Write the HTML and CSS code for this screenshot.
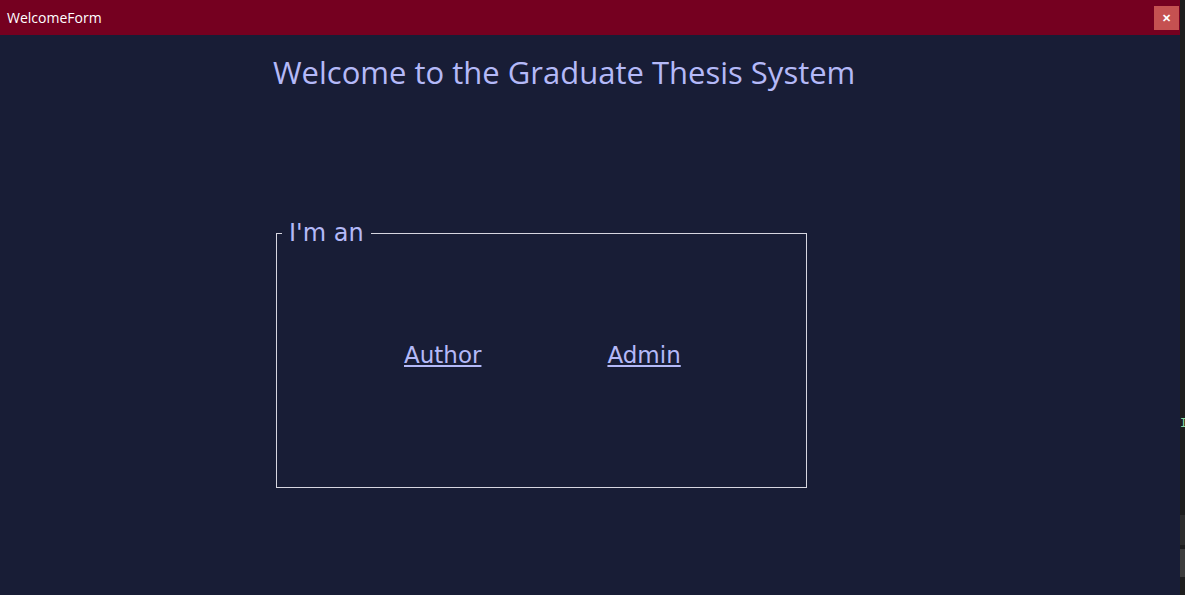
FILE: index.html
```html
<!DOCTYPE html>
<html lang="en">
<head>
  <meta charset="UTF-8">
  <meta name="viewport" content="width=device-width, initial-scale=1.0">
  <title>WelcomeForm</title>
  <link rel="stylesheet" href="styles.css">
</head>
<body>
  <div class="window">
    <div class="titlebar">
      <span class="title">WelcomeForm</span>
      <button class="close">&#x2715;</button>
    </div>

    <div class="content">
      <h1>Welcome to the Graduate Thesis System</h1>

      <fieldset class="role-box">
        <legend>I'm an</legend>
        <div class="roles">
          <a href="#" class="role">Author</a>
          <a href="#" class="role">Admin</a>
        </div>
      </fieldset>
    </div>
  </div>

  <div class="side-strip">
    <span class="caret">I</span>
    <div class="block one"></div>
    <div class="block two"></div>
  </div>
</body>
</html>
```

FILE: styles.css
```css
body {
  margin: 0;
  height: 595px;
  overflow: hidden;
  display: flex;
  background: #181d36;
  font-family: "Open Sans", "Noto Sans", sans-serif;
}

.window {
  flex: 1;
}

.titlebar {
  height: 35px;
  background: #750020;
  display: flex;
  align-items: center;
  justify-content: space-between;
  padding: 0 1px 0 7px;
}

.title {
  color: #ffffff;
  font-size: 14px;
}

.close {
  width: 25px;
  height: 24px;
  margin-top: 1px;
  border: none;
  padding: 0;
  background: #c55151;
  color: #ffffff;
  font-size: 11px;
  font-weight: bold;
}

.content {
  padding-left: 273px;
}

h1 {
  margin: 17px 0 0;
  font-size: 31px;
  font-weight: normal;
  color: #b4b9f8;
  line-height: 40px;
}

.role-box {
  width: 529px;
  margin: 127px 0 0 3px;
  padding: 0;
  border: 1px solid #d6d6e0;
  font-family: "DejaVu Sans", Verdana, sans-serif;
}

.role-box legend {
  margin-left: 5px;
  padding: 0 7px;
  font-size: 24px;
  line-height: 28px;
  color: #b4b9f8;
}

.roles {
  box-sizing: border-box;
  display: flex;
  align-items: flex-start;
  gap: 126px;
  height: 240px;
  padding: 95px 0 0 127px;
}

.role {
  font-size: 23px;
  line-height: 27px;
  color: #b4b9f8;
}

.side-strip {
  width: 5px;
  background: #1e1e1e;
  display: flex;
  flex-direction: column;
}

.caret {
  margin-top: 416px;
  height: 20px;
  font-family: "DejaVu Sans Mono", monospace;
  font-size: 12px;
  color: #8fd9a0;
}

.block.one {
  margin-top: 79px;
  height: 30px;
  background: #2d2d2d;
}

.block.two {
  margin-top: 4px;
  height: 28px;
  background: #3c3c3c;
}
```
